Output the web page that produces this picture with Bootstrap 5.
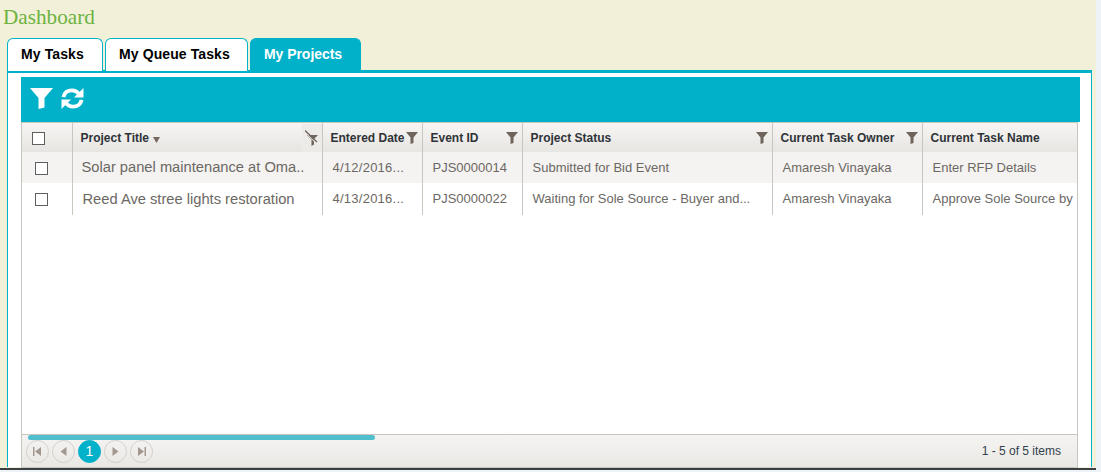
<!DOCTYPE html>
<html lang="en">
<head>
<meta charset="utf-8">
<title>Dashboard</title>
<link rel="stylesheet" href="https://cdn.jsdelivr.net/npm/bootstrap@5.3.0/dist/css/bootstrap.min.css">
<style>
html,body{height:472px;overflow:hidden}
body{background:#eef3f8;font-family:"Liberation Sans",Arial,sans-serif;color:#333}
.shell{width:1096px;height:470px;background:#f3f0d9;border-bottom:2px solid #3c4043;padding:0 4px 0 7px}
.dash-title{font-family:"Liberation Serif",serif;font-size:21.2px;line-height:24px;font-weight:400;color:#6cb33f;margin:0 0 0 -4px;padding-top:5px;height:38px}
.tabset{gap:2px;height:33px;border:0;flex-wrap:nowrap}
.tabset .nav-link{height:33px;border:1px solid #00b1c9;border-bottom:0;border-radius:6px 6px 0 0;background:#fff;color:#000;font-size:14px;font-weight:700;letter-spacing:.1px;line-height:31px;padding:0 13px}
.tabset .nav-link.active{background:#00b1c9;border-color:#00b1c9;color:#fff;letter-spacing:-.05px}
.tab-body{height:397px;margin-top:-1px;background:#fff;border:1px solid #00b1c9;border-top:3px solid #00b1c9;border-bottom:0;padding:4px 11px 0 13px}
.tool-strip{height:45px;background:#00b1c9;gap:8px;padding:10px 0 0 9px}
.grid-box{width:1057px;height:346px;border:1px solid #c9c6bf}
.grid-scroll{flex:1 1 auto;min-height:0}
.grid-table{table-layout:fixed;width:1055px;margin:0;border-collapse:collapse;--bs-table-bg:transparent}
.grid-table th,.grid-table td{padding:0;border:0;border-left:1px solid #c9c6bf;white-space:nowrap;overflow:hidden}
.grid-table th:first-child,.grid-table td:first-child{border-left:0}
.grid-table thead th{height:29px;background:linear-gradient(#f6f5f3,#e6e5e2);font-size:12px;font-weight:700;color:#2f3338;vertical-align:middle;padding-left:8px}
.grid-table thead th:first-child{padding-left:10px}
.grid-table tbody td{font-size:13px;color:#6b6864;vertical-align:middle;padding-left:10px}
.grid-table tbody td:first-child{padding-left:13px}
.grid-table tbody tr.rowa td{height:31px;background:#f5f3f1}
.grid-table tbody tr.rowb td{height:32px;background:#fff}
.grid-table td.title-cell{font-size:14.7px;padding-left:9px}
.grid-table tr.rowb td.title-cell{padding-left:10px}
.grid-table td.date-cell{letter-spacing:.25px}
.head-cell{display:flex;align-items:center;justify-content:space-between}
.sort-mark{margin-left:1px;vertical-align:-1px}
.filter-slot{width:20px;height:28px;display:flex;align-items:center;justify-content:center}
.filter-slot.on{background:#ecebe8}
.filter-slot.tight{width:14px;margin-right:3px}
.tick{display:inline-block;width:13px;height:13px;border:1px solid #5f5f5f;background:#fff;vertical-align:middle}
.grid-foot{height:33px;border-top:1px solid #c9c6bf;background:linear-gradient(#f5f4f2,#e9e8e5);position:relative;padding:5px 16px 0 4px}
.h-thumb{position:absolute;left:6px;top:0;width:347px;height:5px;border-radius:3px;background:#4fbfcd}
.pager{gap:3px}
.pg-btn{width:23px;height:23px;border-radius:50%;border:1px solid #d2d0cb;display:flex;align-items:center;justify-content:center}
.pg-btn.cur{background:#00b1c9;border-color:#00b1c9;color:#fff;font-size:14px}
.pg-count{font-size:12px;color:#333f4d;margin-top:2px}
</style>
</head>
<body>
<div class="shell">
  <h1 class="dash-title">Dashboard</h1>
  <ul class="nav tabset">
    <li class="nav-item"><a class="nav-link" href="#" style="width:96px">My Tasks</a></li>
    <li class="nav-item"><a class="nav-link" href="#" style="width:143px">My Queue Tasks</a></li>
    <li class="nav-item"><a class="nav-link active" href="#" style="width:111px">My Projects</a></li>
  </ul>
  <div class="tab-body">
    <div class="tool-strip d-flex align-items-start">
      <svg width="23" height="23" viewBox="0 0 23 23"><path fill="#fff" d="M0 1H23L14.5 11V20.5L8.5 22V11Z"/></svg>
      <svg width="23" height="23" viewBox="0 0 24 24" fill="none" stroke="#fff" stroke-width="4"><path d="M2.5 10.5C3.5 6 7 3.5 11.5 3.5C15 3.5 17 5 18.5 7"/><path fill="#fff" stroke="none" d="M23.5 1V11H13.5Z"/><path d="M21.5 13.5C20.5 18 17 20.5 12.5 20.5C9 20.5 7 19 5.5 17"/><path fill="#fff" stroke="none" d="M.5 23V13H10.5Z"/></svg>
    </div>
    <div class="grid-box d-flex flex-column">
      <div class="grid-scroll">
        <table class="table grid-table">
          <colgroup><col style="width:50px"><col style="width:250px"><col style="width:100px"><col style="width:100px"><col style="width:250px"><col style="width:150px"><col style="width:155px"></colgroup>
          <thead>
            <tr>
              <th><span class="tick"></span></th>
              <th><div class="head-cell"><span>Project Title <svg class="sort-mark" width="7" height="6" viewBox="0 0 7 6"><path fill="#75695f" d="M0 0H7L3.5 6Z"/></svg></span><span class="filter-slot on"><svg width="13" height="16" viewBox="0 0 13 16"><path fill="#6f655c" d="M2 5H13L9 9V14.5L6.5 16V9.5Z"/><path stroke="#ecebe8" stroke-width="1" d="M0 2.2L11 13.2"/><path stroke="#6f655c" stroke-width="1.3" d="M0 .5L12 12"/></svg></span></div></th>
              <th><div class="head-cell"><span>Entered Date</span><span class="filter-slot tight"><svg width="12" height="12" viewBox="0 0 12 12"><path fill="#6f655c" d="M0 0H12L7.5 5.5V11L4.5 12V5.5Z"/></svg></span></div></th>
              <th><div class="head-cell"><span>Event ID</span><span class="filter-slot"><svg width="12" height="12" viewBox="0 0 12 12"><path fill="#6f655c" d="M0 0H12L7.5 5.5V11L4.5 12V5.5Z"/></svg></span></div></th>
              <th><div class="head-cell"><span>Project Status</span><span class="filter-slot"><svg width="12" height="12" viewBox="0 0 12 12"><path fill="#6f655c" d="M0 0H12L7.5 5.5V11L4.5 12V5.5Z"/></svg></span></div></th>
              <th><div class="head-cell"><span>Current Task Owner</span><span class="filter-slot"><svg width="12" height="12" viewBox="0 0 12 12"><path fill="#6f655c" d="M0 0H12L7.5 5.5V11L4.5 12V5.5Z"/></svg></span></div></th>
              <th>Current Task Name</th>
            </tr>
          </thead>
          <tbody>
            <tr class="rowa">
              <td><span class="tick"></span></td>
              <td class="title-cell">Solar panel maintenance at Oma..</td>
              <td class="date-cell">4/12/2016...</td>
              <td>PJS0000014</td>
              <td>Submitted for Bid Event</td>
              <td>Amaresh Vinayaka</td>
              <td>Enter RFP Details</td>
            </tr>
            <tr class="rowb">
              <td><span class="tick"></span></td>
              <td class="title-cell">Reed Ave stree lights restoration</td>
              <td class="date-cell">4/13/2016...</td>
              <td>PJS0000022</td>
              <td>Waiting for Sole Source - Buyer and...</td>
              <td>Amaresh Vinayaka</td>
              <td>Approve Sole Source by</td>
            </tr>
          </tbody>
        </table>
      </div>
      <div class="grid-foot d-flex justify-content-between align-items-start">
        <span class="h-thumb"></span>
        <div class="pager d-flex">
          <span class="pg-btn"><svg width="9" height="9" viewBox="0 0 9 9"><path fill="#a3988f" d="M0 0H1.5V9H0ZM8 0V9L2 4.5Z"/></svg></span>
          <span class="pg-btn"><svg width="7" height="9" viewBox="0 0 7 9"><path fill="#a3988f" d="M6.5 0V9L.5 4.5Z"/></svg></span>
          <span class="pg-btn cur">1</span>
          <span class="pg-btn"><svg width="7" height="9" viewBox="0 0 7 9"><path fill="#a3988f" d="M.5 0V9L6.5 4.5Z"/></svg></span>
          <span class="pg-btn"><svg width="9" height="9" viewBox="0 0 9 9"><path fill="#a3988f" d="M9 0H7.5V9H9ZM1 0V9L7 4.5Z"/></svg></span>
        </div>
        <span class="pg-count">1 - 5 of 5 items</span>
      </div>
    </div>
  </div>
</div>
<script src="https://cdn.jsdelivr.net/npm/bootstrap@5.3.0/dist/js/bootstrap.bundle.min.js"></script>
</body>
</html>
